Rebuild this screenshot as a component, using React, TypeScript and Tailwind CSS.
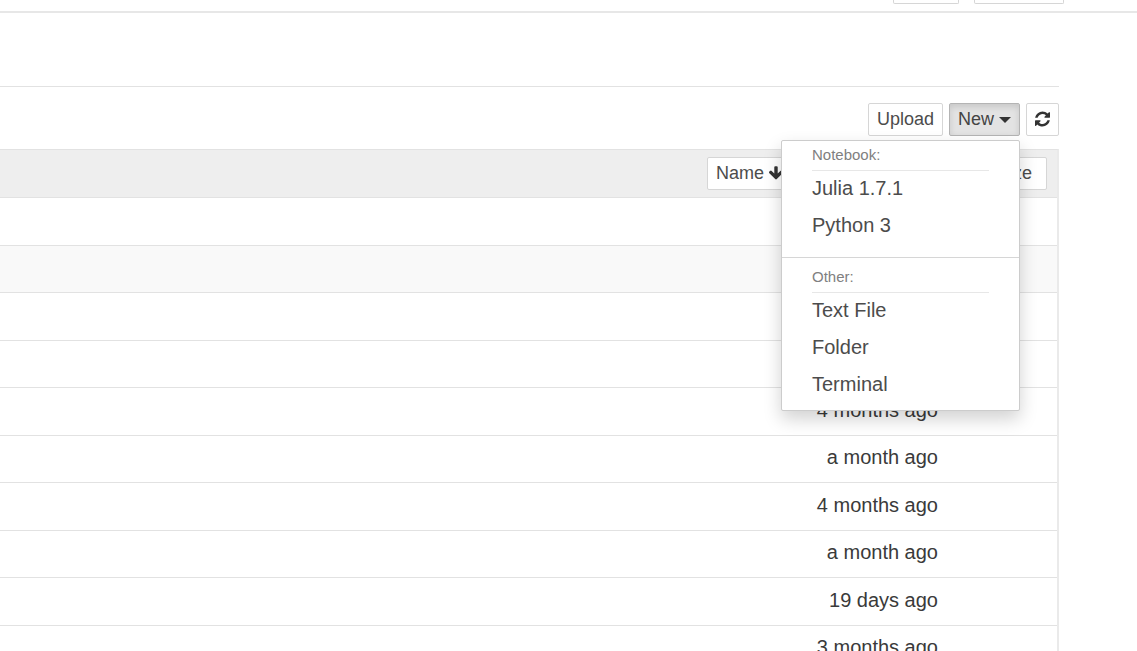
import React, { useState } from 'react';

const files = [
  { id: 1, modified: '' },
  { id: 2, modified: '' },
  { id: 3, modified: '' },
  { id: 4, modified: '' },
  { id: 5, modified: '4 months ago' },
  { id: 6, modified: 'a month ago' },
  { id: 7, modified: '4 months ago' },
  { id: 8, modified: 'a month ago' },
  { id: 9, modified: '19 days ago' },
  { id: 10, modified: '3 months ago' },
];

const menuGroups = [
  { title: 'Notebook:', items: ['Julia 1.7.1', 'Python 3'] },
  { title: 'Other:', items: ['Text File', 'Folder', 'Terminal'] },
];

const buttonClass =
  'inline-flex h-[33px] items-center rounded-xs border border-[#d6d6d6] bg-white pb-[2px] pl-2 text-lg leading-6 whitespace-nowrap text-[#4c4c4c]';

const RefreshIcon: React.FC = () => (
  <svg viewBox="0 0 1536 1792" className="h-[18px] w-[15px] fill-[#333]" aria-hidden="true">
    <path d="M1511 1056q0 5-1 7-64 268-268 434.5t-478 166.5q-146 0-282.5-55t-243.5-157l-129 129q-19 19-45 19t-45-19-19-45v-448q0-26 19-45t45-19h448q26 0 45 19t19 45-19 45l-137 137q71 66 161 102t187 36q134 0 250-65t186-179q11-17 53-117 8-23 30-23h192q13 0 22.5 9.5t9.5 22.5zm25-800v448q0 26-19 45t-45 19h-448q-26 0-45-19t-19-45 19-45l138-138q-148-137-349-137-134 0-250 65t-186 179q-11 17-53 117-8 23-30 23h-199q-13 0-22.5-9.5t-9.5-22.5v-7q65-268 270-434.5t480-166.5q146 0 284 55.5t245 156.5l130-129q19-19 45-19t45 19 19 45z" />
  </svg>
);

const ArrowDownIcon: React.FC = () => (
  <svg viewBox="0 0 1792 1792" className="h-4 w-4 fill-[#333]" aria-hidden="true">
    <path d="M1675 832q0 53-37 90l-651 652q-39 37-91 37-53 0-90-37l-651-652q-38-36-38-90 0-53 38-91l74-75q39-37 91-37 53 0 90 37l294 294v-704q0-52 38-90t90-38h128q52 0 90 38t38 90v704l294-294q37-37 90-37 52 0 91 37l75 75q37 39 37 91z" />
  </svg>
);

const NewMenu: React.FC = () => (
  <div className="absolute top-full right-0 z-10 mt-1 w-[239px] rounded-xs border border-[#ccc] bg-white pb-[6px] shadow-[0_8px_18px_rgba(0,0,0,0.18)]">
    {menuGroups.map((group, i) => (
      <div key={group.title} className={i > 0 ? 'mt-3 border-t border-[#d6d6d6] pt-[5px]' : ''}>
        <div className="mx-[30px] border-b border-[#e7e7e7] pt-1 pb-[5px] text-[15px] leading-5 text-[#808080]">
          {group.title}
        </div>
        <ul>
          {group.items.map((item) => (
            <li key={item}>
              <a href="#" className="block h-[37px] px-[30px] text-xl leading-[34px] text-[#4c4c4c]">
                {item}
              </a>
            </li>
          ))}
        </ul>
      </div>
    ))}
  </div>
);

const FileTable: React.FC = () => (
  <table className="w-full table-fixed border-separate border-spacing-0 border-t border-r-2 border-t-[#e2e2e2] border-r-[#eaeaea]">
    <colgroup>
      <col />
      <col className="w-[163px]" />
      <col className="w-[101px]" />
    </colgroup>
    <thead>
      <tr className="h-12 bg-[#eee]">
        <th className="border-b border-[#e2e2e2] p-0 text-right align-middle font-normal">
          <button className={`${buttonClass} gap-1 pr-2 align-middle`}>
            Name
            <ArrowDownIcon />
          </button>
        </th>
        <th className="border-b border-[#e2e2e2] p-0 text-right align-middle font-normal">
          <button className={`${buttonClass} pr-2 align-middle`}>Last Modified</button>
        </th>
        <th className="border-b border-[#e2e2e2] p-0 pr-[10px] text-right align-middle font-normal">
          <button className={`${buttonClass} pr-[14px] align-middle`}>File size</button>
        </th>
      </tr>
    </thead>
    <tbody>
      {files.map((file) => (
        <tr key={file.id} className="h-12 even:h-[47px] nth-2:bg-[#f9f9f9]">
          <td className="border-b border-[#e2e2e2] p-0" />
          <td className="border-b border-[#e2e2e2] p-0 pr-[18px] pb-1 text-right text-xl leading-6 whitespace-nowrap text-[#3a3a3a]">
            {file.modified}
          </td>
          <td className="border-b border-[#e2e2e2] p-0" />
        </tr>
      ))}
    </tbody>
  </table>
);

const App: React.FC = () => {
  const [menuOpen, setMenuOpen] = useState(true);

  return (
    <div className="h-screen overflow-hidden bg-white font-['Liberation_Sans',Arial,sans-serif]">
      <header className="flex h-[13px] items-start justify-end gap-[15px] border-b-2 border-[#e7e7e7] pr-[73px]">
        <button aria-label="Quit" className="h-1 w-[66px] rounded-b-xs border border-t-0 border-[#d6d6d6]" />
        <button aria-label="Logout" className="h-1 w-[90px] rounded-b-xs border border-t-0 border-[#d6d6d6]" />
      </header>
      <main className="pt-[73px] pr-[78px]">
        <div className="flex justify-end gap-[6px] border-t border-[#e2e2e2] pt-4 pb-[13px]">
          <button className={`${buttonClass} pr-2`}>Upload</button>
          <div className="relative">
            <button
              onClick={() => setMenuOpen(!menuOpen)}
              aria-expanded={menuOpen}
              className="inline-flex h-[33px] items-center gap-[5px] rounded-xs border border-[#b4b4b4] bg-[#e3e3e3] px-2 pb-[2px] text-lg leading-6 text-[#444] shadow-[inset_0_3px_6px_rgba(0,0,0,0.12)]"
            >
              New
              <svg viewBox="0 0 12 6" className="mt-[2px] h-[6px] w-3 fill-[#333]" aria-hidden="true">
                <path d="M0 0h12L6 6z" />
              </svg>
            </button>
            {menuOpen && <NewMenu />}
          </div>
          <button aria-label="Refresh" className={`${buttonClass} pr-2`}>
            <RefreshIcon />
          </button>
        </div>
        <FileTable />
      </main>
    </div>
  );
};

export default App;
